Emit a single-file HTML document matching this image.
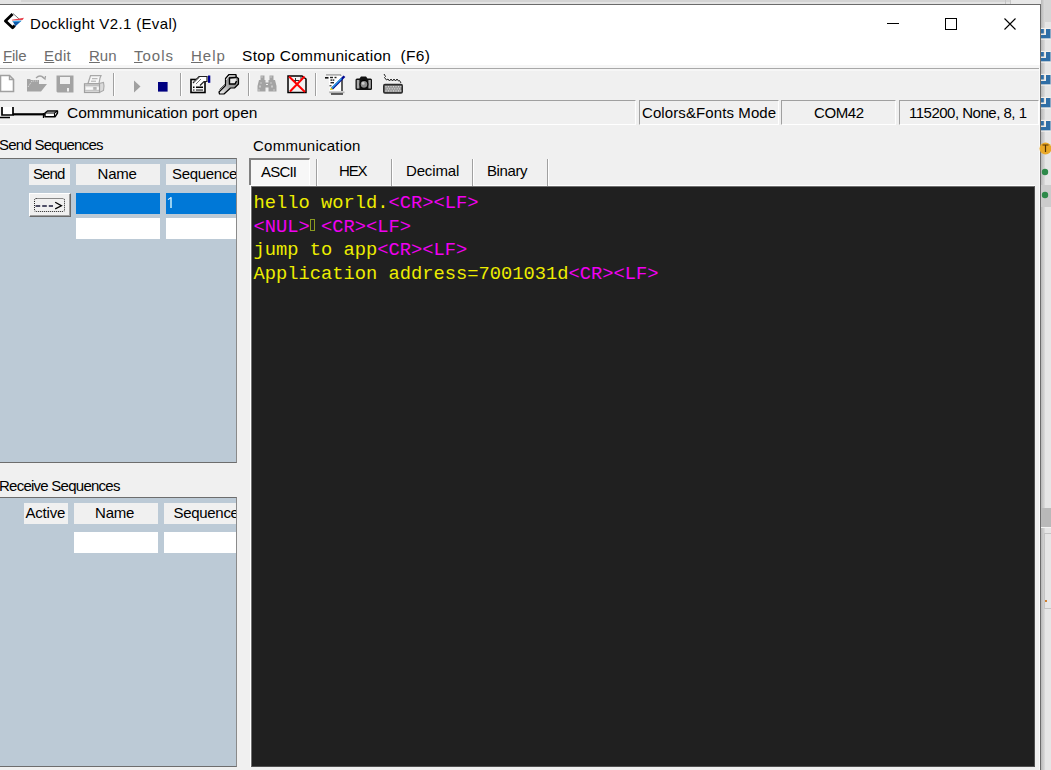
<!DOCTYPE html>
<html><head><meta charset="utf-8">
<style>
*{margin:0;padding:0;box-sizing:border-box}
html,body{width:1051px;height:770px;overflow:hidden;background:#f0f0f0;font-family:"Liberation Sans",sans-serif;color:#000}
.a{position:absolute}
.t{white-space:pre;position:absolute;line-height:1}
svg{position:absolute;overflow:visible}
.grid{background:#bccad6;border-top:1px solid #6d6d6d;border-right:1px solid #8a8a8a;border-bottom:1px solid #6d6d6d}
.hdr{position:absolute;background:#f0f0f0}
.cell{position:absolute;background:#fff}
.sp{position:absolute;border-top:1px solid #a0a0a0;border-left:1px solid #a0a0a0;border-right:1px solid #fff;border-bottom:1px solid #fff}
.mono{font-family:"Liberation Mono",monospace;font-size:18.75px;color:#eded00;line-height:23.5px}
.mg{color:#f000f0}
.sep{position:absolute;width:2px;border-left:1px solid #a0a0a0;border-right:1px solid #fff}
</style></head><body>
<!-- background desktop strips -->
<div class="a" style="left:0;top:0;width:1051px;height:4px;background:#e3e3e3"></div>
<div class="a" style="left:21px;top:0;width:1020px;height:2px;background:#d4d4d4"></div>
<div class="a" style="left:1041px;top:0;width:10px;height:770px;background:#e6e6e6"></div>
<div class="a" style="left:1041px;top:0;width:10px;height:22px;background:#d6d6d6"></div>
<div class="a" style="left:1041px;top:0;width:4px;height:770px;background:linear-gradient(90deg,#b8b8b8,#dcdcdc)"></div>
<!-- window frame -->
<div class="a" style="left:0;top:4px;width:1041px;height:766px;background:#f0f0f0;border-top:1px solid #6b6b6b;border-right:1px solid #6b6b6b"></div>
<div class="a" style="left:0;top:5px;width:1040px;height:60px;background:#fff"></div>
<div class="a" style="left:0;top:65px;width:1040px;height:3px;background:#f6f6f6"></div>
<div class="a" style="left:0;top:68px;width:1040px;height:1px;background:#a8a8a8"></div>
<div class="a" style="left:0;top:69px;width:1040px;height:2px;background:#f6f6f6"></div>
<div class="a" style="left:1039px;top:68px;width:1px;height:702px;background:#fafafa"></div>

<!-- title icon -->
<svg style="left:0;top:0" width="30" height="36" viewBox="0 0 30 36">
  <path d="M12.6 14 L5.4 21 L12.6 27.8 L14.8 25.6" fill="none" stroke="#000" stroke-width="2.8" stroke-linejoin="round"/>
  <path d="M13 13.5 L19.5 19.3" fill="none" stroke="#666" stroke-width="0.9"/>
  <path d="M11.8 19.8 L24 17.8 L22.5 20 L12 20.6 Z" fill="#e8404a"/>
  <path d="M12.5 21 L21.5 20.8 L15.2 26.5 L14.5 24.5 Z" fill="#0e58a8"/>
  <path d="M12.5 21 L21.5 20.8 L20.5 21.8 L13.2 21.9 Z" fill="#38a8e8"/>
</svg>
<div class="t" style="left:30px;top:16px;font-size:15px;letter-spacing:0.35px">Docklight V2.1 (Eval)</div>
<!-- window controls -->
<div class="a" style="left:887px;top:23px;width:12px;height:1px;background:#000"></div>
<div class="a" style="left:945px;top:18px;width:12px;height:12px;border:1px solid #000"></div>
<svg style="left:1004px;top:18px" width="12" height="12" viewBox="0 0 12 12"><path d="M0.5 0.5 L11.5 11.5 M11.5 0.5 L0.5 11.5" stroke="#000" stroke-width="1.1"/></svg>

<!-- menu -->
<div class="t" style="left:3px;top:47.5px;font-size:15px;color:#6d6d6d;letter-spacing:-0.2px"><u>F</u>ile</div>
<div class="t" style="left:44px;top:47.5px;font-size:15px;color:#6d6d6d;letter-spacing:0.3px"><u>E</u>dit</div>
<div class="t" style="left:89px;top:47.5px;font-size:15px;color:#6d6d6d"><u>R</u>un</div>
<div class="t" style="left:134px;top:47.5px;font-size:15px;color:#6d6d6d;letter-spacing:1px"><u>T</u>ools</div>
<div class="t" style="left:191px;top:47.5px;font-size:15px;color:#6d6d6d;letter-spacing:1px"><u>H</u>elp</div>
<div class="t" style="left:242px;top:48px;font-size:15.5px;letter-spacing:0.3px">Stop Communication  (F6)</div>
<!-- toolbar -->
<svg style="left:0;top:0" width="420" height="100" viewBox="0 0 420 100">
  <!-- new doc (disabled) -->
  <path d="M0.5 75.5 H9.5 L13.5 79.5 V91.5 H0.5 Z" fill="#fff" stroke="#a0a0a0" stroke-width="1.6"/>
  <path d="M9.5 75.5 V79.5 H13.5" fill="none" stroke="#a0a0a0" stroke-width="1.4"/>
  <!-- open folder (disabled) -->
  <path d="M27 79 L30 79 L31 80 L39 80 L39 84 L47 84 L41 91.5 L27 91.5 Z" fill="#a3a3a3"/>
  <path d="M28 87 L32 81 L38 81" fill="none" stroke="#f4f4f4" stroke-width="0.8" stroke-dasharray="1 1"/>
  <path d="M36 78 Q40 74 44 78" fill="none" stroke="#a3a3a3" stroke-width="1.3"/>
  <path d="M42.5 77 L45 79 L45.5 76" fill="none" stroke="#a3a3a3" stroke-width="1.3"/>
  <!-- save (disabled) -->
  <path d="M56.5 75.5 H73.5 V92.5 H57.5 L56.5 91.5 Z" fill="#a3a3a3"/>
  <rect x="60" y="77" width="10" height="7" fill="#f0f0f0"/>
  <rect x="67" y="88" width="2" height="3.5" fill="#f0f0f0"/>
  <!-- printer (disabled) -->
  <path d="M90.5 75.7 H101 L100 78 L99 83.5 H88 Z" fill="#f6f6f6" stroke="#a8a8a8" stroke-width="1.2"/>
  <path d="M92 78.7 H97.5 M91 81.2 H96" stroke="#a8a8a8" stroke-width="1"/>
  <path d="M99 83.5 L103.5 82.5 L104 86 L103.5 90.5 L99.5 92.5 Z" fill="#dadada" stroke="#a8a8a8" stroke-width="1.1"/>
  <rect x="84.5" y="83.8" width="15" height="8.7" fill="#e2e2e2" stroke="#a0a0a0" stroke-width="1.2"/>
  <rect x="85" y="84.5" width="14" height="1.6" fill="#c0c0c0"/>
  <rect x="86" y="87.3" width="6.8" height="2.2" fill="#fafafa"/>
  <rect x="93.3" y="87" width="3.2" height="2.8" fill="#b4b4b4"/>
  <rect x="97" y="87.3" width="1.8" height="2.2" fill="#fafafa"/>
  <rect x="85" y="90.2" width="14" height="1" fill="#bcbcbc"/>
  <!-- play (disabled) -->
  <path d="M134 80.5 L140.5 86.5 L134 92.5 Z" fill="#a0a0a0"/>
  <!-- stop -->
  <rect x="158" y="82" width="9.6" height="9.6" fill="#000080"/>
  <!-- properties -->
  <rect x="191" y="79.5" width="14" height="13" fill="#f8f8f8" stroke="#000" stroke-width="1.6"/>
  <path d="M193 83 L199 76.5 H207 V81.5 H204 L200 85.5" fill="#fff" stroke="#222" stroke-width="1.2"/>
  <path d="M194 82 L199.5 77.5 M196 84 L201 79" stroke="#777" stroke-width="1"/>
  <rect x="208" y="75.5" width="2.3" height="7.3" fill="#000090"/>
  <rect x="193" y="86.5" width="1.5" height="1.5" fill="#000"/>
  <rect x="196" y="86.5" width="7" height="1.5" fill="#000"/>
  <rect x="193" y="89.3" width="1.5" height="1.5" fill="#555"/>
  <rect x="196" y="89.3" width="7" height="1.5" fill="#555"/>
  <!-- wrench -->
  <defs><linearGradient id="wg" x1="0" y1="1" x2="1" y2="0"><stop offset="0" stop-color="#f8f8f8"/><stop offset="0.5" stop-color="#a0a0a0"/><stop offset="1" stop-color="#707070"/></linearGradient></defs>
  <path d="M225.5 78.5 L229 74.5 H236 L236.3 77 L238.5 78.5 V84 L234.5 88 H230.5 L224 94 L219.5 94 L219 92 L225.5 85.5 Z" fill="url(#wg)" stroke="#000" stroke-width="1.2" stroke-linejoin="round"/>
  <path d="M236 77.5 L229.5 78 V84 H235 L236.5 81" fill="#e8e8e8" stroke="#000" stroke-width="1.4"/>
  <path d="M226 80 L229 76 H235" fill="none" stroke="#fff" stroke-width="0.8"/>
  <path d="M225.3 84 L219.5 89.5" stroke="#222" stroke-width="0.8"/>
  <!-- binoculars (disabled) -->
  <g fill="#a3a3a3">
  <rect x="260.5" y="75.5" width="4" height="5"/>
  <rect x="269.5" y="75.5" width="4" height="5"/>
  <path d="M259 80 H265.5 V82.5 H268.5 V80 H275 L276.5 86 V91.5 H268.5 V87.5 H265.5 V91.5 H257.5 V86 Z"/>
  </g>
  <g fill="#f0f0f0">
  <rect x="261.5" y="76.5" width="1" height="1"/><rect x="270.5" y="76.5" width="1" height="1"/>
  <rect x="260.5" y="82.5" width="1" height="1"/><rect x="270.5" y="82.5" width="1" height="1"/>
  <rect x="259.5" y="85.5" width="1" height="2"/><rect x="271.5" y="85.5" width="1" height="2"/>
  <rect x="258.5" y="89.5" width="1" height="1"/><rect x="273.5" y="89.5" width="1" height="1"/>
  <rect x="266" y="84" width="2" height="1"/>
  </g>
  <!-- red x box -->
  <path d="M288 76 H302 L306 79 V92.5 H288 Z" fill="#f2f2f2" stroke="#000" stroke-width="1.5"/>
  <path d="M292 80.5 H299 M295.5 78 V84 M301 79 V76" stroke="#333" stroke-width="1"/>
  <path d="M289 76.5 L305 92 M304.5 76.5 L290 91.5" stroke="#f00" stroke-width="2"/>
  <!-- notepad with pen -->
  <path d="M326 74.8 H340.5 L341 76" fill="none" stroke="#9a9a9a" stroke-width="1.3"/>
  <path d="M328.5 76 H341 L342 80 V91 H329.5 Z" fill="#fff"/>
  <path d="M342 79 V91" stroke="#1a1a1a" stroke-width="1.4"/>
  <rect x="325" y="77" width="3.5" height="1.6" fill="#111"/>
  <rect x="330" y="76.8" width="3" height="1.4" fill="#222"/>
  <rect x="334.5" y="76.8" width="2" height="1.4" fill="#222"/>
  <rect x="330.5" y="79.3" width="2" height="1.6" fill="#444"/>
  <rect x="333" y="79.3" width="1.3" height="1.6" fill="#444"/>
  <rect x="330.5" y="82" width="3.5" height="1.4" fill="#222"/>
  <rect x="329.5" y="85" width="2" height="1.4" fill="#555"/>
  <path d="M329 91.5 H344.5 V93.2 H329.5 Z" fill="#b0b0b0"/>
  <path d="M331 94 H343" stroke="#111" stroke-width="1.3"/>
  <path d="M331 88 L343.5 75.5 L345.3 77 L333 89.5 Z" fill="#000a90"/>
  <path d="M331 88 L341 78 L342 79 L332 89 Z" fill="#2aa0e8"/>
  <path d="M330 90 L331 87.5 L333.2 89.5 Z" fill="#d8c800"/>
  <!-- camera -->
  <path d="M355.5 80 Q355.5 78.5 357 78.5 H359.5 L361 76.5 H366 L367.5 78.5 H370.5 Q372 78.5 372 80 V88.5 Q372 90 370.5 90 H357 Q355.5 90 355.5 88.5 Z" fill="#111"/>
  <rect x="356.8" y="80" width="2.6" height="8.5" fill="#a8a8a8"/>
  <rect x="368.4" y="80" width="2.4" height="8.5" fill="#a8a8a8"/>
  <circle cx="364" cy="84.3" r="3.9" fill="#8c8c8c" stroke="#000" stroke-width="1.1"/>
  <circle cx="363.2" cy="83.4" r="1.4" fill="#cfcfcf"/>
  <!-- keyboard -->
  <path d="M384 74 L385.5 76.5 L384.5 77.5 L386.5 80 L388 79 L389.5 81 L391 79 L392.5 81 L394 79 L395.5 81 L397 79 L398.5 81 L399.5 80.5 L401 83" fill="none" stroke="#222" stroke-width="1"/>
  <rect x="383" y="83.8" width="20" height="10" rx="2" fill="#2a2a2a"/>
  <rect x="384.6" y="85.5" width="16.8" height="6.6" fill="#9a9a9a"/>
  <g fill="#e8e8e8">
  <rect x="385.5" y="86.2" width="1" height="1"/><rect x="388" y="86.2" width="1" height="1"/><rect x="390.5" y="86.2" width="1" height="1"/><rect x="393" y="86.2" width="1" height="1"/><rect x="395.5" y="86.2" width="1" height="1"/><rect x="398" y="86.2" width="1" height="1"/><rect x="400.3" y="86.2" width="1" height="1"/>
  <rect x="386.7" y="88.3" width="1" height="1"/><rect x="389.2" y="88.3" width="1" height="1"/><rect x="391.7" y="88.3" width="1" height="1"/><rect x="394.2" y="88.3" width="1" height="1"/><rect x="396.7" y="88.3" width="1" height="1"/><rect x="399.2" y="88.3" width="1" height="1"/>
  <rect x="385.5" y="90.4" width="1" height="1"/><rect x="388" y="90.4" width="1" height="1"/><rect x="390.5" y="90.4" width="1" height="1"/><rect x="393" y="90.4" width="1" height="1"/><rect x="395.5" y="90.4" width="1" height="1"/><rect x="398" y="90.4" width="1" height="1"/><rect x="400.3" y="90.4" width="1" height="1"/>
  </g>
</svg>
<div class="sep" style="left:113px;top:73px;height:23px"></div>
<div class="sep" style="left:180px;top:73px;height:23px"></div>
<div class="sep" style="left:248px;top:73px;height:23px"></div>
<div class="sep" style="left:315px;top:73px;height:23px"></div>

<!-- status bar -->
<div class="sp" style="left:-1px;top:100px;width:637px;height:25px"></div>
<div class="sp" style="left:639px;top:100px;width:140px;height:25px"></div>
<div class="sp" style="left:781px;top:100px;width:115px;height:25px"></div>
<div class="sp" style="left:899px;top:100px;width:140px;height:25px"></div>
<svg style="left:0;top:0" width="60" height="125" viewBox="0 0 60 125">
  <path d="M2 107 V115 H13 V107" fill="#fff" stroke="#000" stroke-width="1.7"/>
  <path d="M0 117.5 H10" stroke="#000" stroke-width="1.5"/>
  <path d="M13 114.3 H45" stroke="#000" stroke-width="2.2"/>
  <path d="M43.5 113 V118" stroke="#000" stroke-width="1.3"/>
  <path d="M45 113 L47.5 111 H57.5 V113 L55 116.8 H45 Z" fill="#fff" stroke="#000" stroke-width="1.4" stroke-linejoin="round"/>
  <path d="M45 113 H54.5 L57.5 111 M54.5 113 V116.5" fill="none" stroke="#000" stroke-width="1.1"/>
</svg>
<div class="t" style="left:67px;top:105px;font-size:15.5px">Commmunication port open</div>
<div class="t" style="left:642px;top:105px;font-size:15px;letter-spacing:0.1px">Colors&amp;Fonts Mode</div>
<div class="t" style="left:814px;top:105px;font-size:15px;letter-spacing:-0.4px">COM42</div>
<div class="t" style="left:909px;top:105px;font-size:15px;letter-spacing:-0.5px">115200, None, 8, 1</div>
<!-- send sequences -->
<div class="t" style="left:-1px;top:136.5px;font-size:15px;letter-spacing:-0.75px">Send Sequences</div>
<div class="a grid" style="left:0;top:158px;width:237px;height:305px"></div>
<div class="hdr" style="left:29px;top:164px;width:41px;height:21px"></div>
<div class="hdr" style="left:76px;top:164px;width:84px;height:21px"></div>
<div class="hdr" style="left:166px;top:164px;width:70px;height:21px"></div>
<div class="t" style="left:33px;top:166.3px;font-size:15px;letter-spacing:-0.9px">Send</div>
<div class="t" style="left:97.5px;top:166px;font-size:15px;letter-spacing:-0.2px">Name</div>
<div class="a" style="left:166px;top:164px;width:70px;height:21px;overflow:hidden"><div class="t" style="left:6px;top:2px;font-size:15px;letter-spacing:-0.3px">Sequence</div></div>
<div class="a" style="left:29px;top:193px;width:42px;height:24px;background:#f0f0f0;border-top:1px solid #fff;border-left:1px solid #fff;border-right:1px solid #696969;border-bottom:1px solid #696969"></div>
<div class="a" style="left:30px;top:194px;width:40px;height:22px;border-right:1px solid #a0a0a0;border-bottom:1px solid #a0a0a0"></div>
<div class="a" style="left:34px;top:198px;width:31px;height:14px;border:1px dotted #222;border-radius:2.5px"></div>
<svg style="left:0;top:0" width="70" height="220" viewBox="0 0 70 220"><path d="M35.5 206 H40.2 M42.2 206 H46.8 M48.8 206 H53" stroke="#1a1a3a" stroke-width="1.6"/><path d="M55.2 202.2 L61.4 205.8 L55.2 208.8" fill="none" stroke="#000" stroke-width="1.3"/></svg>
<div class="cell" style="left:76px;top:193px;width:84px;height:21px;background:#0078d7"></div>
<div class="cell" style="left:166px;top:193px;width:70px;height:21px;background:#0078d7"></div>
<svg style="left:0;top:0" width="180" height="215" viewBox="0 0 180 215"><path d="M171 197.3 V208" stroke="#e8ffff" stroke-width="1.3"/><path d="M171 197.6 L168 199.6" stroke="#f0f8ff" stroke-width="1.1"/></svg>
<div class="cell" style="left:76px;top:218px;width:84px;height:21px"></div>
<div class="cell" style="left:166px;top:218px;width:70px;height:21px"></div>

<!-- receive sequences -->
<div class="t" style="left:-1px;top:477.7px;font-size:15px;letter-spacing:-0.75px">Receive Sequences</div>
<div class="a grid" style="left:0;top:497px;width:237px;height:270px"></div>
<div class="hdr" style="left:24px;top:503px;width:44px;height:21px"></div>
<div class="hdr" style="left:74px;top:503px;width:84px;height:21px"></div>
<div class="hdr" style="left:164px;top:503px;width:72px;height:21px"></div>
<div class="t" style="left:25.5px;top:505px;font-size:15px;letter-spacing:-0.2px">Active</div>
<div class="t" style="left:95px;top:505px;font-size:15px;letter-spacing:-0.2px">Name</div>
<div class="a" style="left:164px;top:503px;width:72px;height:21px;overflow:hidden"><div class="t" style="left:9.5px;top:2px;font-size:15px;letter-spacing:-0.3px">Sequence</div></div>
<div class="cell" style="left:74px;top:532px;width:84px;height:21px"></div>
<div class="cell" style="left:164px;top:532px;width:72px;height:21px"></div>

<!-- communication -->
<div class="t" style="left:253px;top:137.7px;font-size:15px;letter-spacing:0.26px">Communication</div>
<div class="a" style="left:249px;top:158px;width:61px;height:27px;border-top:2px solid #808080;border-left:2px solid #808080;border-right:1px solid #fff;background-color:#f7f7f7"></div>
<div class="a" style="left:250px;top:185px;width:785px;height:582px;border-top:1px solid #fff;border-left:1px solid #fff"></div>
<div class="t" style="left:261px;top:164.3px;font-size:15px;letter-spacing:-0.8px">ASCII</div>
<div class="sep" style="left:316px;top:159px;height:27px"></div>
<div class="sep" style="left:391px;top:159px;height:27px"></div>
<div class="sep" style="left:472px;top:159px;height:27px"></div>
<div class="sep" style="left:547px;top:159px;height:27px"></div>
<div class="t" style="left:339px;top:162.8px;font-size:15px;letter-spacing:-1.2px">HEX</div>
<div class="t" style="left:406px;top:162.8px;font-size:15px;letter-spacing:-0.15px">Decimal</div>
<div class="t" style="left:487px;top:162.8px;font-size:15px;letter-spacing:-0.4px">Binary</div>
<div class="a" style="left:251px;top:186px;width:784px;height:581px;background:#202020;border-top:1px solid #707070;border-left:1px solid #707070;border-right:1px solid #505050;border-bottom:1px solid #505050"></div>
<div class="t mono" style="left:253.5px;top:192px">hello world.<span class="mg">&lt;CR&gt;&lt;LF&gt;</span>
<span class="mg">&lt;NUL&gt;</span><span style="display:inline-block;width:11.25px;position:relative"><span style="position:absolute;left:0px;top:-13px;width:5px;height:12px;border:1px solid #8a9a20"></span></span><span class="mg">&lt;CR&gt;&lt;LF&gt;</span>
jump to app<span class="mg">&lt;CR&gt;&lt;LF&gt;</span>
Application address=7001031d<span class="mg">&lt;CR&gt;&lt;LF&gt;</span></div>

<!-- right strip desktop icons -->
<div class="a" style="left:1041px;top:185px;width:10px;height:22px;background:#cccccc"></div>
<svg style="left:1041px;top:0" width="10" height="210" viewBox="0 0 10 210">
  <g fill="#2f6ea6"><path d="M0 29 H2.8 V33.6 H0 Z M5 29 H9.5 V38.5 H0 V35 H5 Z"/><path d="M0 34.3 H4.2 V29 M0 28.4 H9.5 M0 39.1 H9.5" fill="none" stroke="#f6f2ee" stroke-width="1"/><path d="M0 52 H2.8 V56.6 H0 Z M5 52 H9.5 V61.5 H0 V58 H5 Z"/><path d="M0 57.3 H4.2 V52 M0 51.4 H9.5 M0 62.1 H9.5" fill="none" stroke="#f6f2ee" stroke-width="1"/><path d="M0 75 H2.8 V79.6 H0 Z M5 75 H9.5 V84.5 H0 V81 H5 Z"/><path d="M0 80.3 H4.2 V75 M0 74.4 H9.5 M0 85.1 H9.5" fill="none" stroke="#f6f2ee" stroke-width="1"/><path d="M0 98 H2.8 V102.6 H0 Z M5 98 H9.5 V107.5 H0 V104 H5 Z"/><path d="M0 103.3 H4.2 V98 M0 97.4 H9.5 M0 108.1 H9.5" fill="none" stroke="#f6f2ee" stroke-width="1"/><path d="M0 121 H2.8 V125.6 H0 Z M5 121 H9.5 V130.5 H0 V127 H5 Z"/><path d="M0 126.3 H4.2 V121 M0 120.4 H9.5 M0 131.1 H9.5" fill="none" stroke="#f6f2ee" stroke-width="1"/></g>
  <circle cx="4.5" cy="148.5" r="6" fill="#e8a828"/>
  <path d="M1.5 145 H7.5 M4.5 145 V152" stroke="#553300" stroke-width="1.2"/>
  <circle cx="4" cy="172" r="3.2" fill="#2e8a4a"/>
  <circle cx="4" cy="195" r="3.2" fill="#2e8a4a"/>
</svg>
<div class="a" style="left:1041px;top:508px;width:10px;height:19px;background:#b9b9b9"></div>
<div class="a" style="left:1041px;top:527px;width:10px;height:1px;background:#f4f4f4"></div>
<div class="a" style="left:1044px;top:533px;width:7px;height:76px;border-left:1px solid #c4c4c4;border-top:1px solid #c4c4c4"></div>
<div class="a" style="left:1044px;top:608px;width:7px;height:1px;background:#c4c4c4"></div>
<div class="a" style="left:1045px;top:600px;width:2px;height:2px;background:#d08030"></div>
<div class="a" style="left:1005px;top:0;width:1px;height:4px;background:#c4c4c4"></div>
<div class="a" style="left:1010px;top:0;width:1px;height:4px;background:#c8c8c8"></div>
<div class="a" style="left:1011px;top:0;width:30px;height:4px;background:#e8e8e8"></div>
</body></html>
